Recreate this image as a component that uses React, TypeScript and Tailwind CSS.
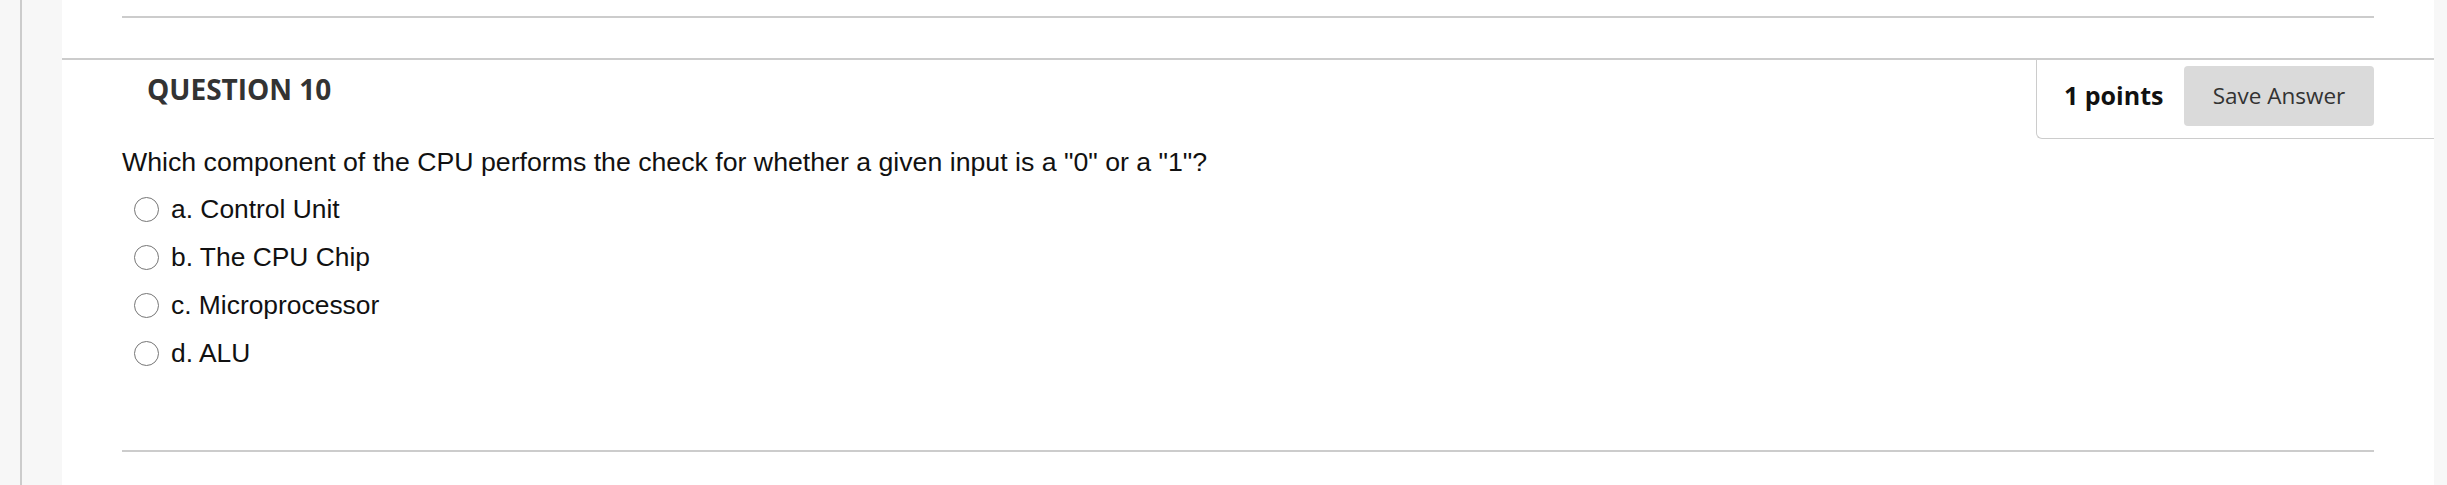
import { useState } from "react";

const options = [
  { key: "a", label: "a. Control Unit" },
  { key: "b", label: "b. The CPU Chip" },
  { key: "c", label: "c. Microprocessor" },
  { key: "d", label: "d. ALU" },
];

export default function App() {
  const [picked, setPicked] = useState<string | null>(null);

  return (
    <div className="flex h-[485px] w-full bg-white overflow-hidden">
      {/* left gutter */}
      <div className="w-[62px] shrink-0 bg-[#f7f7f7] pl-[20px]">
        <div className="h-full w-[2px] bg-[#cccccc]" />
      </div>

      <div className="flex-1 flex flex-col">
        <div className="pt-4">
          <div className="mx-[60px] h-[42px] border-t-2 border-[#cccccc]" />
        </div>

        <div className="border-t-2 border-[#cccccc]">
          <div className="flex items-start justify-between">
            <h3 className="pl-[85px] mt-[10px] text-[28px] leading-[38px] font-bold text-[#333333] font-['Open_Sans',sans-serif]">
              QUESTION 10
            </h3>
            <div className="w-[398px] flex items-center justify-between pl-[27px] pr-[60px] pt-[6px] pb-[12px] border-l border-b border-[#cccccc] rounded-bl-[6px] font-['Open_Sans',sans-serif]">
              <span className="text-[25px] font-bold text-[#111111]">1 points</span>
              <button className="w-[190px] h-[60px] rounded-[4px] bg-[#dadada] text-[22.5px] text-[#333333]">
                Save Answer
              </button>
            </div>
          </div>

          <div className="pl-[60px] font-['Liberation_Sans',Arial,sans-serif] text-[#111111]">
            <p className="mt-[8px] text-[26.7px] leading-[30px]">
              Which component of the CPU performs the check for whether a given input is a "0" or a "1"?
            </p>
            <ul className="mt-[8px] pl-[12px]">
              {options.map((o) => (
                <li
                  key={o.key}
                  className="flex h-[48px] items-center gap-[12px] cursor-pointer"
                  onClick={() => setPicked(o.key)}
                >
                  <span className="flex h-[25px] w-[25px] items-center justify-center rounded-full border-[1.5px] border-[#767676] bg-white">
                    {picked === o.key && <span className="h-[13px] w-[13px] rounded-full bg-[#0075ff]" />}
                  </span>
                  <span className="text-[26.4px] leading-[30px]">{o.label}</span>
                </li>
              ))}
            </ul>
          </div>

          <div className="mx-[60px] mt-[73px] border-t-2 border-[#cccccc]" />
        </div>
      </div>

      {/* right gutter */}
      <div className="w-[13px] shrink-0 bg-[#f7f7f7]" />
    </div>
  );
}
